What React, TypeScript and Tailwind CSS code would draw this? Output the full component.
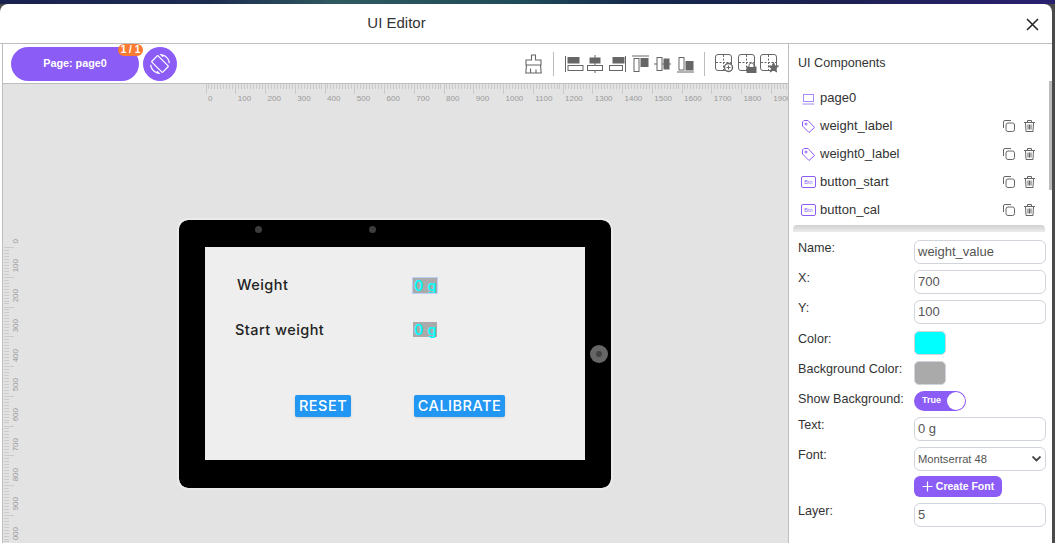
import React from 'react'

const font = { fontFamily: '"Liberation Sans", Arial, sans-serif' }

const labels = ['weight_label', 'weight0_label']
const buttons = ['button_start', 'button_cal']

function TagIcon() {
    return (
        <svg width="13" height="13" viewBox="0 0 13 13" fill="none" stroke="#8b5cf6" strokeWidth="1">
            <path d="M0.5 2 L0.5 6 L7 12.5 L12.5 7.5 L6 0.5 L2 0.5 Z" strokeLinejoin="round" />
            <circle cx="4" cy="4" r="1" />
        </svg>
    )
}

function BtnIcon() {
    return (
        <svg width="15" height="12" viewBox="0 0 15 12" fill="none">
            <rect x="0.5" y="0.5" width="14" height="11" rx="1.5" stroke="#8b5cf6" />
            <text x="7.5" y="8" fontSize="5.5" textAnchor="middle" fill="#8b5cf6" fontFamily="Liberation Sans">Btn</text>
        </svg>
    )
}

function CopyIcon() {
    return (
        <svg width="12" height="12" viewBox="0 0 12 12" fill="none" stroke="#666" strokeWidth="1">
            <rect x="3" y="3" width="8.5" height="8.5" rx="2" />
            <path d="M0.5 8 V2 a1.5 1.5 0 0 1 1.5 -1.5 H8" />
        </svg>
    )
}

function TrashIcon() {
    return (
        <svg width="11" height="12" viewBox="0 0 11 12" fill="none" stroke="#666" strokeWidth="1">
            <path d="M0 2.5 H11 M3.5 2.5 V0.5 H7.5 V2.5 M1.5 2.5 L2 11.5 H9 L9.5 2.5 M4 4.5 V9.5 M5.5 4.5 V9.5 M7 4.5 V9.5" />
        </svg>
    )
}

function ItemRow({ icon, name, actions = true }: { icon: React.ReactNode; name: string; actions?: boolean }) {
    return (
        <div className="flex items-center h-[28px] pl-[11px] pr-[17px]">
            <div className="w-[16px] flex justify-center">{icon}</div>
            <span className="ml-[4px] flex-1 text-[13px] text-[#333]">{name}</span>
            {actions && (
                <div className="flex items-center gap-[9px]">
                    <CopyIcon />
                    <TrashIcon />
                </div>
            )}
        </div>
    )
}

function Field({ label, children, h = 'h-[30px]' }: { label: string; children: React.ReactNode; h?: string }) {
    return (
        <div className={`flex ${h}`}>
            <div className="w-[125px] shrink-0 whitespace-nowrap text-[12.6px] leading-[16px] text-[#333] pl-[9px]">{label}</div>
            <div className="flex-1">{children}</div>
        </div>
    )
}

function TextInput({ value }: { value: string }) {
    return (
        <div className="h-[24px] w-[132px] rounded-[6px] border border-[#d1d5db] px-[3px] text-[13px] leading-[22px] text-[#555] bg-white">
            {value}
        </div>
    )
}

function Swatch({ color }: { color: string }) {
    return <div className="h-[24px] w-[32px] rounded-[5px] border border-[#d1d5db]" style={{ backgroundColor: color }} />
}

function ToolIcon({ children }: { children: React.ReactNode }) {
    return (
        <svg width="18" height="18" viewBox="0 0 18 18" fill="none" stroke="#666" strokeWidth="1" className="overflow-visible">
            {children}
        </svg>
    )
}

function AlignIcons() {
    return (
        <div className="flex items-center gap-[4.4px]">
            <ToolIcon>
                <path d="M0.5 1 V17" /><rect x="3" y="2.5" width="11" height="5.5" fill="#666" /><rect x="3" y="10.5" width="15" height="5" />
            </ToolIcon>
            <ToolIcon>
                <path d="M8 0 V3 M8 8 V10 M8 15 V18" /><rect x="3" y="3" width="10" height="5" fill="#666" /><rect x="0.5" y="10.5" width="15" height="5" />
            </ToolIcon>
            <ToolIcon>
                <path d="M16.5 1 V17" /><rect x="4" y="2.5" width="11" height="5.5" fill="#666" /><rect x="0.5" y="10.5" width="13" height="5" />
            </ToolIcon>
            <ToolIcon>
                <path d="M0 1 H17" /><rect x="2" y="3.5" width="5" height="13" /><rect x="9" y="3.5" width="7" height="8" fill="#666" />
            </ToolIcon>
            <ToolIcon>
                <path d="M0 9 H3 M8 9 H10 M15 9 H17" /><rect x="3" y="2.5" width="5" height="13" /><rect x="10" y="4" width="5" height="10" fill="#666" />
            </ToolIcon>
            <ToolIcon>
                <path d="M0 17 H17" /><rect x="2" y="2.5" width="5" height="12.5" /><rect x="9" y="6.5" width="7" height="8.5" fill="#666" />
            </ToolIcon>
        </div>
    )
}

function GridIcon({ badge }: { badge: React.ReactNode }) {
    return (
        <svg width="19" height="19" viewBox="0 0 19 19" fill="none" stroke="#666" strokeWidth="1" className="overflow-visible">
            <rect x="0.5" y="0.5" width="16" height="16" rx="2.5" />
            <path d="M8.5 1 V16 M1 8.5 H16" strokeDasharray="2 1.5" />
            {badge}
        </svg>
    )
}

function HRuler() {
    const marks = Array.from({ length: 20 }, (_, i) => i)
    return (
        <div className="flex h-[22px] overflow-hidden pl-[202.5px] shrink-0">
            {marks.map((i) => (
                <div key={i} className="w-[29.75px] shrink-0">
                    <div className="h-[10px] flex items-start">
                        {[0, 1, 2, 3, 4, 5, 6, 7, 8, 9].map((t) => (
                            <div key={t} className={`w-[2.975px] shrink-0 border-l border-[#cacaca] ${t === 0 ? 'h-[10px]' : 'h-[5px]'}`} />
                        ))}
                    </div>
                    <div className="text-[8px] leading-[9px] text-[#9a9a9a] pl-[2.5px] whitespace-nowrap">{i * 100}</div>
                </div>
            ))}
        </div>
    )
}

function VRuler() {
    const marks = Array.from({ length: 11 }, (_, i) => i)
    return (
        <div className="absolute left-[1px] top-[163px] w-[18px]">
            {marks.map((i) => (
                <div key={i} className="relative h-[29.75px]">
                    {[0, 1, 2, 3, 4, 5, 6, 7, 8, 9].map((t) => (
                        <div key={t} className={`h-[2.975px] border-t border-[#cacaca] ${t === 0 ? 'w-[10px]' : 'w-[5px]'}`} />
                    ))}
                </div>
            ))}
            {marks.map((i) => (
                <div
                    key={i}
                    className="absolute left-[7px] text-[8px] leading-[9px] text-[#9a9a9a] [writing-mode:vertical-rl] whitespace-nowrap"
                    style={{ bottom: `${(11 - i) * 29.75 + 4}px`, transform: 'rotate(180deg)' }}
                >
                    {i === 10 ? '000' : i * 100}
                </div>
            ))}
        </div>
    )
}

function Tablet() {
    const mont = { fontFamily: 'Inter, "Open Sans", sans-serif' }
    return (
        <div className="relative w-[432px] h-[268px] bg-black rounded-[9px] outline-2 outline-[#ebebeb]">
            <div className="absolute left-[76px] top-[6px] w-[7px] h-[7px] rounded-full bg-[#3c3c3c]" />
            <div className="absolute left-[190px] top-[6px] w-[7px] h-[7px] rounded-full bg-[#3c3c3c]" />
            <div className="absolute left-[411px] top-[125px] w-[18px] h-[18px] rounded-full bg-[#666] flex items-center justify-center">
                <div className="w-[6px] h-[6px] rounded-full bg-[#444]" />
            </div>
            <div className="absolute left-[26px] top-[27px] w-[380px] h-[213px] bg-[#eeeeee]" style={mont}>
                <div className="absolute left-[32px] top-[29px] text-[14.5px] font-medium leading-[18px] tracking-[0.45px] text-[#222]">Weight</div>
                <div className="absolute left-[30px] top-[74px] text-[14.5px] font-medium leading-[18px] tracking-[0.45px] text-[#222] whitespace-nowrap">Start weight</div>
                <div className="absolute left-[208px] top-[31px] w-[24px] h-[15px] bg-[#aaaaaa] outline outline-[#bcd0f5] text-[14px] font-semibold leading-[15px] tracking-[0.4px] text-[#00ffff] pl-[1px] whitespace-nowrap">0 g</div>
                <div className="absolute left-[208px] top-[75px] w-[24px] h-[15px] bg-[#aaaaaa] text-[14px] font-semibold leading-[15px] tracking-[0.4px] text-[#00ffff] pl-[1px] whitespace-nowrap">0 g</div>
                <div className="absolute left-[90px] top-[148px] w-[56px] h-[22px] bg-[#2196f3] text-white text-[14.5px] font-medium tracking-[0.5px] leading-[22px] text-center rounded-[2px] shadow-sm">RESET</div>
                <div className="absolute left-[209px] top-[148px] w-[91px] h-[22px] bg-[#2196f3] text-white text-[14.5px] font-medium tracking-[0.5px] leading-[22px] text-center rounded-[2px] shadow-sm">CALIBRATE</div>
            </div>
        </div>
    )
}

export default function App() {
    return (
        <div className="w-[1055px] h-[543px] overflow-hidden bg-[#4a4a4a] flex flex-col" style={font}>
            <div className="h-[4px] shrink-0 bg-[linear-gradient(90deg,#1a2150_0%,#1c2c50_20%,#2f5a60_32%,#1f4a58_50%,#13284c_60%,#1c2050_78%,#2a2070_100%)]" />
            <div className="flex-1 flex flex-col min-h-0 mr-[3px] bg-white rounded-t-[8px] overflow-hidden">
                {/* header */}
                <div className="relative h-[40px] shrink-0 flex items-center justify-center border-b border-[#bdbdbd]">
                    <span className="text-[15px] text-[#333] mr-[259px]">UI Editor</span>
                    <svg className="absolute right-[13px] top-[14px]" width="13" height="13" viewBox="0 0 13 13" stroke="#222" strokeWidth="1.5">
                        <path d="M1 1 L12 12 M12 1 L1 12" />
                    </svg>
                </div>

                <div className="flex-1 flex min-h-0">
                    {/* canvas side */}
                    <div className="w-[787px] ml-[2px] shrink-0 flex flex-col border-l border-r border-[#bdbdbd]">
                        <div className="h-[40px] shrink-0 bg-white border-b border-[#bdbdbd] flex items-center pl-[8px] pr-[9px]">
                            <div className="relative w-[128px] h-[34px] rounded-[17px] bg-[#8b5cf6] flex items-center justify-center text-[10.8px] font-bold text-white">
                                Page: page0
                                <div className="absolute right-[-4px] top-[-3px] h-[12px] w-[25px] rounded-full bg-[#fb7a32] text-[10px] leading-[12px] text-center">1 / 1</div>
                            </div>
                            <div className="ml-[4px] w-[34px] h-[34px] rounded-full bg-[#8b5cf6] flex items-center justify-center">
                                <svg width="20" height="20" viewBox="0 0 24 24" fill="#fff">
                                    <path d="M16.48 2.52c3.27 1.55 5.61 4.72 5.97 8.48h1.5C23.44 4.84 18.29 0 12 0l-.66.03 3.81 3.81 1.33-1.32zm-6.25-.77c-.59-.59-1.54-.59-2.12 0L1.75 8.11c-.59.59-.59 1.54 0 2.12l12.02 12.02c.59.59 1.54.59 2.12 0l6.36-6.36c.59-.59.59-1.54 0-2.12L10.23 1.75zm4.6 19.44L2.81 9.17l6.36-6.36 12.02 12.02-6.36 6.36zm-7.31.29C4.25 19.94 1.91 16.76 1.55 13H.05C.56 19.16 5.71 24 12 24l.66-.03-3.81-3.81-1.33 1.32z" />
                                </svg>
                            </div>
                            <div className="flex-1" />
                            <svg width="17" height="20" viewBox="0 0 17 20" fill="none" stroke="#666" strokeWidth="1.1">
                                <path d="M6.5 1 H10.5 V6 H16 V11 H1 V6 H6.5 Z M1.5 11 L0.8 19 H16.2 L15.5 11 M5.5 19 V14.5 M11 19 V15.5" />
                            </svg>
                            <div className="w-px h-[24px] bg-[#bdbdbd] mx-[11px]" />
                            <AlignIcons />
                            <div className="w-px h-[24px] bg-[#bdbdbd] ml-[9.5px] mr-[10px]" />
                            <div className="flex items-center gap-[3.5px]">
                                <GridIcon badge={<><circle cx="13.5" cy="13.5" r="4" fill="#fff" strokeWidth="1.4" /><path d="M11.5 13.5 H15.5 M13.5 11.5 V15.5" /></>} />
                                <GridIcon badge={<><rect x="9" y="13" width="9" height="5.5" fill="#666" /><path d="M11 13 V11.5 a2.5 2.5 0 0 1 5 0 V13" fill="#fff" /></>} />
                                <GridIcon badge={<path d="M13.5 8.5 L14.8 12 L18.5 12 L15.5 14.3 L16.7 18 L13.5 15.8 L10.3 18 L11.5 14.3 L8.5 12 L12.2 12 Z" fill="#666" />} />
                            </div>
                        </div>
                        <div className="relative flex-1 min-h-0 bg-[#e3e3e3] flex flex-col overflow-hidden">
                            <HRuler />
                            <VRuler />
                            <div className="pl-[176px] pt-[114px]">
                                <Tablet />
                            </div>
                        </div>
                    </div>

                    {/* right side */}
                    <div className="flex-1 min-w-0 flex flex-col">
                        <div className="relative h-[188px] shrink-0">
                            <div className="h-[40px] pl-[9px] pt-[11px] text-[12.6px] leading-[17px] text-[#333]">UI Components</div>
                            <ItemRow name="page0" actions={false} icon={
                                <svg width="13" height="13" viewBox="0 0 13 13" fill="none" stroke="#a78bfa">
                                    <rect x="1.5" y="2.5" width="10" height="7" /><path d="M0.5 12 H12.5" />
                                </svg>
                            } />
                            {labels.map((n) => <ItemRow key={n} name={n} icon={<TagIcon />} />)}
                            {buttons.map((n) => <ItemRow key={n} name={n} icon={<BtnIcon />} />)}
                            <div className="absolute right-0 top-[37px] w-[3px] h-[109px] bg-[#bdbdbd]" />
                            <div className="absolute left-[4px] right-[7px] bottom-0 h-[7px] rounded-t-[4px] bg-gradient-to-b from-[#d0d0d0] to-[#ececec]" />
                        </div>
                        <div className="flex-1 min-h-0 flex flex-col pt-[8px]">
                            <Field label="Name:"><TextInput value="weight_value" /></Field>
                            <Field label="X:"><TextInput value="700" /></Field>
                            <Field label="Y:" h="h-[31px]"><TextInput value="100" /></Field>
                            <Field label="Color:"><Swatch color="#00ffff" /></Field>
                            <Field label="Background Color:"><Swatch color="#aaaaaa" /></Field>
                            <Field label="Show Background:" h="h-[26px]">
                                <div className="w-[52px] h-[20px] rounded-full bg-[#8b5cf6] flex items-center justify-between pl-[8px] pr-[1px] text-[9px] font-bold text-white">
                                    True
                                    <div className="w-[18px] h-[18px] rounded-full bg-white" />
                                </div>
                            </Field>
                            <Field label="Text:"><TextInput value="0 g" /></Field>
                            <Field label="Font:" h="h-[29px]">
                                <div className="h-[24px] w-[132px] rounded-[6px] border border-[#d1d5db] pl-[3px] pr-[4px] flex items-center justify-between text-[11.2px] text-[#555]">
                                    Montserrat 48
                                    <svg width="9" height="6" viewBox="0 0 9 6" fill="none" stroke="#444" strokeWidth="1.8"><path d="M0.5 0.5 L4.5 4.5 L8.5 0.5" /></svg>
                                </div>
                            </Field>
                            <div className="h-[27px] pl-[125px]">
                                <div className="w-[88px] h-[21px] rounded-[6px] bg-[#8b5cf6] flex items-center justify-center gap-[3px] text-[10.5px] font-bold text-white">
                                    <svg width="11" height="11" viewBox="0 0 11 11" stroke="#fff" strokeWidth="1.2"><path d="M5.5 0.5 V10.5 M0.5 5.5 H10.5" /></svg>
                                    Create Font
                                </div>
                            </div>
                            <Field label="Layer:"><TextInput value="5" /></Field>
                        </div>
                    </div>
                </div>
            </div>
        </div>
    )
}
